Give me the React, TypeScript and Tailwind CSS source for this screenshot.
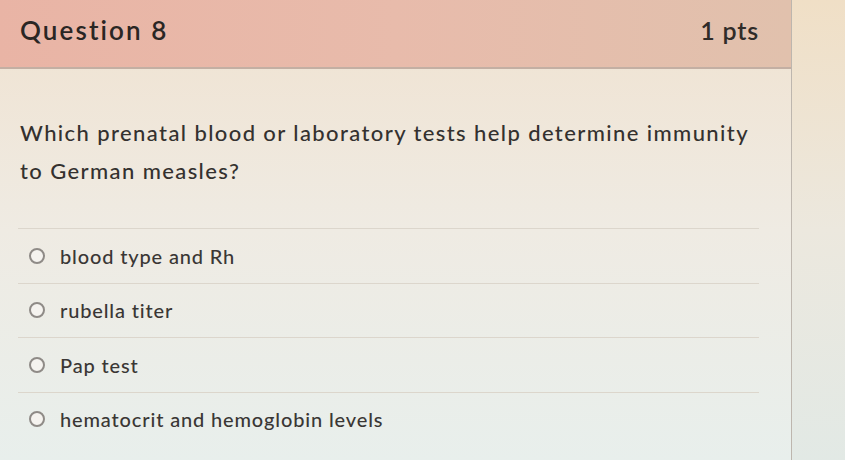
import { useState } from "react";

const answers = [
  "blood type and Rh",
  "rubella titer",
  "Pap test",
  "hematocrit and hemoglobin levels",
];

export default function App() {
  const [picked, setPicked] = useState<number | null>(null);

  return (
    <div
      className="flex h-[460px] w-[845px] overflow-hidden bg-linear-to-b from-[#f0dfc6] via-[#ece8de] to-[#e2e9e5]"
      style={{ fontFamily: "Lato, 'Open Sans', sans-serif" }}
    >
      {/* Question card */}
      <div className="flex w-[792px] shrink-0 flex-col border-r border-[#bdb6ae] bg-linear-to-b from-[#f0e2d0] via-[#efebe3] to-[#e8efec]">
        <div className="flex h-[69px] shrink-0 items-center justify-between border-b-2 border-[#c3afa3] bg-linear-to-r from-[#e9b4a5] via-[#e8bbab] to-[#e1c1ad] pb-[6px] pl-[20px] pr-[32px]">
          <h2 className="text-[26px] font-semibold tracking-[2.1px] text-[#2a2624]">Question 8</h2>
          <span className="text-[25px] font-semibold tracking-[0.8px] text-[#302c29]">1 pts</span>
        </div>

        <div className="px-[20px] pt-[45px] pb-[38px] text-[22px] font-medium leading-[38px] tracking-[1.4px] text-[#34312f]">
          Which prenatal blood or laboratory tests help determine immunity
          <br />
          to German measles?
        </div>

        <div className="ml-[18px] mr-[32px] flex flex-col">
          {answers.map((a, i) => (
            <label
              key={a}
              className="flex h-[54.5px] cursor-pointer items-center gap-[15px] border-t border-[#dcd6cc] pl-[11px] text-[20px] font-medium tracking-[0.85px] text-[#3a3735]"
            >
              <span
                onClick={() => setPicked(i)}
                className="flex h-[16px] w-[16px] items-center justify-center rounded-full border-2 border-[#8f8b87] bg-[#f5f3ef]"
              >
                {picked === i && <span className="h-[7px] w-[7px] rounded-full bg-[#3f3c3a]" />}
              </span>
              <span>{a}</span>
            </label>
          ))}
        </div>
      </div>
      <div className="flex-1" />
    </div>
  );
}
